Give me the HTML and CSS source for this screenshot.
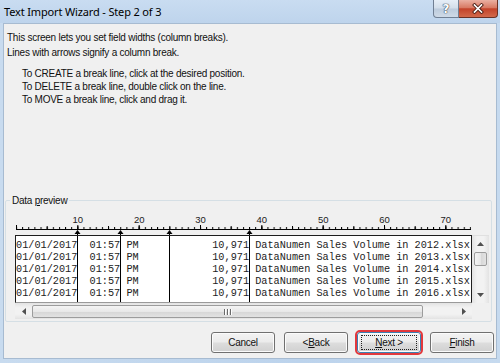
FILE: index.html
```html
<!DOCTYPE html>
<html>
<head>
<meta charset="utf-8">
<title>Text Import Wizard</title>
<link rel="stylesheet" href="styles.css">
</head>
<body>
<div class="window">
  <div class="titlebar">
    <span class="title">Text Import Wizard - Step 2 of 3</span>
    <div class="caption-buttons">
      <div class="cap-btn help">?</div>
      <div class="cap-btn close">
        <svg width="14" height="11" viewBox="0 0 14 11"><path d="M3.5 2 L10.5 9 M10.5 2 L3.5 9" stroke="#4a1c12" stroke-width="3.4" stroke-linecap="square"/><path d="M3.5 2 L10.5 9 M10.5 2 L3.5 9" stroke="#fff" stroke-width="1.7" stroke-linecap="square"/></svg>
      </div>
    </div>
  </div>
  <div class="client">
    <p class="intro">This screen lets you set field widths (column breaks).<br>Lines with arrows signify a column break.</p>
    <p class="howto">To CREATE a break line, click at the desired position.<br>To DELETE a break line, double click on the line.<br>To MOVE a break line, click and drag it.</p>
    <fieldset class="group">
      <legend>Data <u>p</u>review</legend>
      <svg class="ruler" width="457" height="23" viewBox="0 0 457 23">
        <defs>
          <pattern id="tick1" x="1" y="0" width="6.1333" height="23" patternUnits="userSpaceOnUse"><rect x="0" y="15" width="1" height="2" fill="#000"/></pattern>
          <pattern id="tick5" x="1" y="0" width="30.6667" height="23" patternUnits="userSpaceOnUse"><rect x="0" y="14" width="1" height="3" fill="#000"/></pattern>
          <pattern id="tick10" x="1" y="0" width="61.3333" height="23" patternUnits="userSpaceOnUse"><rect x="0" y="13" width="1" height="4" fill="#000"/></pattern>
        </defs>
        <rect x="1" y="13" width="455" height="4" fill="url(#tick1)"/>
        <rect x="1" y="13" width="455" height="4" fill="url(#tick5)"/>
        <rect x="1" y="13" width="455" height="4" fill="url(#tick10)"/>
        <rect x="1" y="17" width="455" height="1" fill="#000"/>
        <g class="ruler-nums">
          <text x="62.8" y="11">10</text>
          <text x="124.2" y="11">20</text>
          <text x="185.5" y="11">30</text>
          <text x="246.8" y="11">40</text>
          <text x="308.2" y="11">50</text>
          <text x="369.5" y="11">60</text>
          <text x="430.8" y="11">70</text>
        </g>
        <g fill="#000">
          <path d="M62.5 18 L65.5 22 L59.5 22 Z"/><rect x="62" y="21" width="1" height="2"/>
          <path d="M105.5 18 L108.5 22 L102.5 22 Z"/><rect x="105" y="21" width="1" height="2"/>
          <path d="M154.5 18 L157.5 22 L151.5 22 Z"/><rect x="154" y="21" width="1" height="2"/>
          <path d="M234.5 18 L237.5 22 L231.5 22 Z"/><rect x="234" y="21" width="1" height="2"/>
        </g>
      </svg>
      <div class="preview">
        <div class="text-area">
          <div class="row">01/01/2017  01:57 PM            10,971 DataNumen Sales Volume in 2012.xlsx</div>
          <div class="row">01/01/2017  01:57 PM            10,971 DataNumen Sales Volume in 2013.xlsx</div>
          <div class="row">01/01/2017  01:57 PM            10,971 DataNumen Sales Volume in 2014.xlsx</div>
          <div class="row">01/01/2017  01:57 PM            10,971 DataNumen Sales Volume in 2015.xlsx</div>
          <div class="row">01/01/2017  01:57 PM            10,971 DataNumen Sales Volume in 2016.xlsx</div>
          <div class="break" style="left:61px"></div>
          <div class="break" style="left:104px"></div>
          <div class="break" style="left:153px"></div>
          <div class="break" style="left:233px"></div>
        </div>
        <div class="vscroll">
          <div class="sb-arrow"><svg width="7" height="4" viewBox="0 0 7 4"><path d="M0 4 L3.5 0 L7 4 Z" fill="#505050"/></svg></div>
          <div class="v-thumb"></div>
          <div class="v-track"></div>
          <div class="sb-arrow"><svg width="7" height="4" viewBox="0 0 7 4"><path d="M0 0 L7 0 L3.5 4 Z" fill="#505050"/></svg></div>
        </div>
        <div class="hscroll">
          <div class="sb-arrow"><svg width="4" height="7" viewBox="0 0 4 7"><path d="M4 0 L4 7 L0 3.5 Z" fill="#505050"/></svg></div>
          <div class="h-thumb"><span class="grip"></span><span class="grip"></span><span class="grip"></span></div>
          <div class="h-track"></div>
          <div class="sb-arrow"><svg width="4" height="7" viewBox="0 0 4 7"><path d="M0 0 L4 3.5 L0 7 Z" fill="#505050"/></svg></div>
        </div>
        <div class="corner"></div>
      </div>
    </fieldset>
    <div class="buttons">
      <button class="btn">Cancel</button>
      <button class="btn">&lt; <u>B</u>ack</button>
      <button class="btn default"><span class="focus"><u>N</u>ext &gt;</span></button>
      <button class="btn"><u>F</u>inish</button>
    </div>
  </div>
</div>
</body>
</html>
```

FILE: styles.css
```css
* { box-sizing: border-box; }
html, body { margin: 0; padding: 0; }
body {
  width: 500px;
  height: 363px;
  overflow: hidden;
  font-family: "Liberation Sans", Arial, sans-serif;
  font-size: 10px;
  letter-spacing: -0.25px;
  color: #111;
  background: #c3d8ee;
}
.window {
  width: 500px;
  height: 363px;
  display: flex;
  flex-direction: column;
  padding: 0 3px 4px;
  background: linear-gradient(90deg, #c8dbef, #bcd3ec 60%, #c6daef);
}
.titlebar {
  height: 23px;
  margin: 0 -3px;
  display: flex;
  justify-content: space-between;
  align-items: flex-start;
  background: linear-gradient(180deg, #c9dcf1 0%, #bed4ec 100%);
}
.title {
  font-family: "Noto Sans", sans-serif;
  font-size: 11px;
  letter-spacing: -0.15px;
  line-height: 16px;
  margin: 4px 0 0 4px;
  color: #000;
}
.caption-buttons {
  display: flex;
  margin-right: 2px;
}
.cap-btn {
  height: 18px;
  display: flex;
  align-items: center;
  justify-content: center;
}
.help {
  width: 26px;
  border: 1px solid #707f93;
  border-top: none;
  border-radius: 0 0 0 4px;
  background: linear-gradient(180deg, #e6eef7 0%, #d3deea 48%, #bccbdc 52%, #cfdae7 100%);
  font-family: "DejaVu Sans", sans-serif;
  font-weight: bold;
  font-size: 12px;
  letter-spacing: 0;
  color: #fff;
  text-shadow: 0 0 1px #3a4658, 0 0 1px #3a4658, 0 0 1px #3a4658;
}
.close {
  width: 39px;
  border: 1px solid #6a3125;
  border-top: none;
  border-left: none;
  border-radius: 0 0 4px 0;
  background: linear-gradient(180deg, #eab0a2 0%, #d87a64 45%, #c3432a 52%, #d2694b 100%);
}
.client {
  flex: 1;
  background: #f0f0f0;
  border: 1px solid #a7bbd1;
  display: flex;
  flex-direction: column;
}
.intro {
  margin: 6px 0 0 3px;
  line-height: 15px;
}
.howto {
  margin: 7px 0 0 18px;
  line-height: 13px;
}
.group {
  margin: 88px 4px 0 1px;
  padding: 0 2px 2px 9px;
  border: 1px solid #d5dfe5;
  border-radius: 2px;
  min-width: 0;
}
.group legend {
  margin-left: -5px;
  padding: 0 2px;
  line-height: 13px;
}
.ruler {
  display: block;
  margin-top: 5px;
}
.ruler-nums text {
  font-family: "Liberation Sans", Arial, sans-serif;
  font-size: 9.5px;
  letter-spacing: 0;
  fill: #222;
  text-anchor: middle;
}
.preview {
  display: grid;
  grid-template-columns: 457px 17px;
  grid-template-rows: 68px 16px;
  width: 474px;
}
.text-area {
  position: relative;
  background: #fff;
  border: 1px solid #1e1e1e;
  border-bottom-color: #9a9a9a;
  padding-top: 3px;
  overflow: hidden;
}
.row {
  font-family: "Liberation Mono", monospace;
  font-size: 10.22px;
  letter-spacing: 0;
  line-height: 12px;
  height: 12px;
  white-space: pre;
  color: #222;
}
.break {
  position: absolute;
  top: 0;
  bottom: 0;
  width: 1px;
  background: #000;
}
.vscroll {
  display: flex;
  flex-direction: column;
  background: linear-gradient(90deg, #e3e3e3, #f2f2f2 30%, #f2f2f2 70%, #e3e3e3);
  border-top: 1px solid #e0e0e0;
}
.vscroll .sb-arrow {
  height: 16px;
  display: flex;
  align-items: center;
  justify-content: center;
}
.v-thumb {
  margin: 0 2px;
  height: 14px;
  border: 1px solid #9c9c9c;
  border-radius: 2px;
  background: linear-gradient(90deg, #f4f4f4, #e6e6e6 50%, #d6d6d6 51%, #e3e3e3);
}
.v-track { flex: 1; }
.hscroll {
  display: flex;
  align-items: stretch;
  background: linear-gradient(180deg, #e3e3e3, #f2f2f2 30%, #f2f2f2 70%, #e3e3e3);
}
.hscroll .sb-arrow {
  width: 17px;
  display: flex;
  align-items: center;
  justify-content: center;
}
.h-thumb {
  width: 391px;
  margin: 2px 0 1px;
  border: 1px solid #9c9c9c;
  border-radius: 2px;
  background: linear-gradient(180deg, #f4f4f4, #e8e8e8 50%, #d6d6d6 51%, #e2e2e2);
  display: flex;
  justify-content: center;
  align-items: center;
  gap: 2px;
}
.grip {
  width: 1px;
  height: 6px;
  background: #6a6a6a;
  box-shadow: 1px 0 0 #fff;
}
.h-track { flex: 1; }
.corner { background: #f0f0f0; }
.buttons {
  margin-top: 10px;
  display: flex;
  justify-content: flex-end;
  gap: 9px;
  padding-right: 2px;
}
.btn {
  width: 64px;
  height: 21px;
  padding: 0;
  border: 1px solid #707070;
  border-radius: 3px;
  background: linear-gradient(180deg, #f3f3f3 0%, #ebebeb 48%, #dddddd 52%, #d0d0d0 100%);
  box-shadow: inset 0 0 0 1px #fbfbfb;
  font-family: "Liberation Sans", Arial, sans-serif;
  font-size: 10px;
  letter-spacing: -0.25px;
  color: #111;
  display: flex;
  align-items: center;
  justify-content: center;
}
.btn.default {
  border-color: #3c7fb1;
  outline: 2px solid #e3383c;
  outline-offset: 0;
}
.focus {
  display: flex;
  align-items: center;
  justify-content: center;
  width: 56px;
  height: 15px;
  border: 1px dotted #222;
}
```
